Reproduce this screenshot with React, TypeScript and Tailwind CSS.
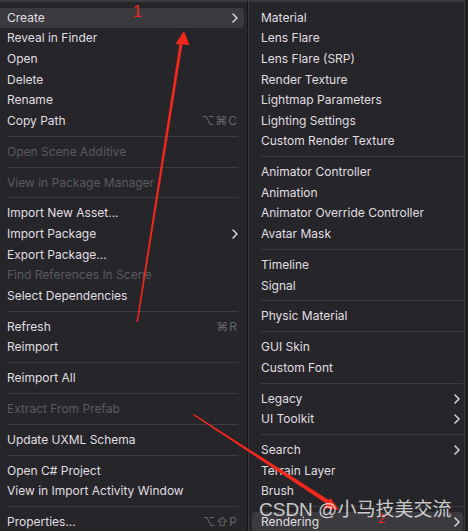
import React from 'react';

type Item =
  | { sep: true }
  | { label: string; shortcut?: string; sub?: boolean; disabled?: boolean; active?: boolean };

const SEP = { sep: true } as const;

const LEFT_ITEMS: Item[] = [
  { label: 'Create', sub: true, active: true },
  { label: 'Reveal in Finder' },
  { label: 'Open' },
  { label: 'Delete' },
  { label: 'Rename' },
  { label: 'Copy Path', shortcut: '⌥⌘C' },
  SEP,
  { label: 'Open Scene Additive', disabled: true },
  SEP,
  { label: 'View in Package Manager', disabled: true },
  SEP,
  { label: 'Import New Asset...' },
  { label: 'Import Package', sub: true },
  { label: 'Export Package...' },
  { label: 'Find References In Scene', disabled: true },
  { label: 'Select Dependencies' },
  SEP,
  { label: 'Refresh', shortcut: '⌘R' },
  { label: 'Reimport' },
  SEP,
  { label: 'Reimport All' },
  SEP,
  { label: 'Extract From Prefab', disabled: true },
  SEP,
  { label: 'Update UXML Schema' },
  SEP,
  { label: 'Open C# Project' },
  { label: 'View in Import Activity Window' },
  SEP,
  { label: 'Properties...', shortcut: '⌥⇧P' },
];

const RIGHT_ITEMS: Item[] = [
  { label: 'Material' },
  { label: 'Lens Flare' },
  { label: 'Lens Flare (SRP)' },
  { label: 'Render Texture' },
  { label: 'Lightmap Parameters' },
  { label: 'Lighting Settings' },
  { label: 'Custom Render Texture' },
  SEP,
  { label: 'Animator Controller' },
  { label: 'Animation' },
  { label: 'Animator Override Controller' },
  { label: 'Avatar Mask' },
  SEP,
  { label: 'Timeline' },
  { label: 'Signal' },
  SEP,
  { label: 'Physic Material' },
  SEP,
  { label: 'GUI Skin' },
  { label: 'Custom Font' },
  SEP,
  { label: 'Legacy', sub: true },
  { label: 'UI Toolkit', sub: true },
  SEP,
  { label: 'Search', sub: true },
  { label: 'Terrain Layer' },
  { label: 'Brush' },
  SEP,
  { label: 'Rendering', sub: true, active: true },
];

function Chevron() {
  return (
    <svg width="6" height="10" viewBox="0 0 6 10" className="shrink-0">
      <path d="M1 1l4 4-4 4" fill="none" stroke="#d8d8da" strokeWidth="1.5" strokeLinecap="round" strokeLinejoin="round" />
    </svg>
  );
}

function MenuList({ items, textPad, rowClass, sepClass }: { items: Item[]; textPad: string; rowClass: string; sepClass: string }) {
  return (
    <div className="pt-[5.5px]">
      {items.map((it, i) => {
        if ('sep' in it) {
          return (
            <div key={i} className={`h-[10.3px] flex items-center ${sepClass}`}>
              <div className="h-px w-full bg-[#3d3c41]" />
            </div>
          );
        }
        return (
          <div
            key={i}
            className={`h-[20.6px] flex items-center justify-between rounded-[4px] ${textPad} ${rowClass} ${
              it.active ? 'bg-[#3b3a3f]' : ''
            }`}
          >
            <span className={it.disabled ? 'text-[#5b5a5f]' : 'text-[#e0dfe2]'}>{it.label}</span>
            {it.shortcut && <span className="text-[#66656a] tracking-[1px]">{it.shortcut}</span>}
            {it.sub && <Chevron />}
          </div>
        );
      })}
    </div>
  );
}

export default function App() {
  return (
    <div
      className="relative w-[468px] h-[531px] overflow-hidden bg-[#1f1e22] flex text-[12px] leading-none"
      style={{ fontFamily: 'Inter, "Noto Sans", "Noto Sans CJK SC", sans-serif' }}
    >
      {/* Main context menu */}
      <div className="w-[248px] h-full bg-[#262529] border-t-2 border-t-[#3a393d] border-r border-r-[#17161a] pr-[3px]">
        <MenuList items={LEFT_ITEMS} textPad="pl-[7px] pr-[6px]" rowClass="rounded-l-none" sepClass="pl-[7px] pr-[6px]" />
      </div>

      {/* Create submenu */}
      <div className="w-[217px] h-full bg-[#262529] border-t-2 border-t-[#3a393d] border-l border-l-[#3a393d] border-r border-r-[#3a393d] pl-[3px] pr-px">
        <MenuList items={RIGHT_ITEMS} textPad="pl-[9px] pr-[3px]" rowClass="" sepClass="pl-[9px]" />
      </div>

      {/* Annotations */}
      <svg className="absolute inset-0 pointer-events-none" width="468" height="531" viewBox="0 0 468 531">
        <polygon points="136.5,322 138,322 182.5,44 179.5,44" fill="#f3281c" />
        <polygon points="184,31 175.5,44 189.5,45" fill="#f3281c" />
        <polygon points="193,415 193.8,414 329.5,500.5 327,504" fill="#f3281c" />
        <polygon points="339,510 323.8,507.9 330.4,497.9" fill="#f3281c" />
      </svg>
      <span
        className="absolute left-[133px] top-[4px] text-[16px] text-[#f3281c]"
        style={{ fontFamily: '"Liberation Sans", sans-serif' }}
      >
        1
      </span>
      <span
        className="absolute left-[378px] top-[512px] text-[13px] text-[#f3281c]"
        style={{ fontFamily: '"Liberation Sans", sans-serif' }}
      >
        2
      </span>
      <span
        className="absolute left-[259px] top-[500px] text-[19px] leading-none text-white/75 whitespace-nowrap"
        style={{ fontFamily: '"Liberation Sans", "Noto Sans CJK SC", sans-serif' }}
      >
        CSDN @小马技美交流
      </span>
    </div>
  );
}
